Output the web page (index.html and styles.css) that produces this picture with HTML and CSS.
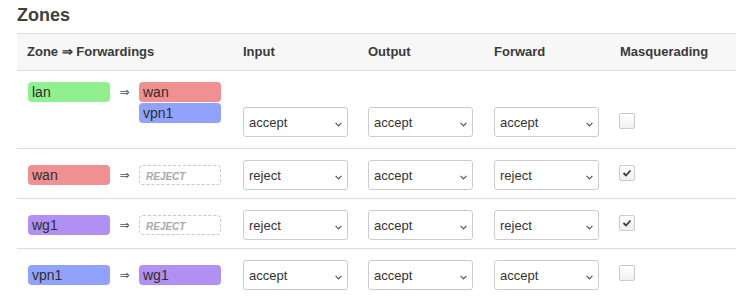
FILE: index.html
```html
<!DOCTYPE html>
<html>
<head>
    <title>Firewall - Zones</title>
    <link rel="stylesheet" href="styles.css">
</head>
<body>
<div class="page">
    <h2 class="title">Zones</h2>

    <table class="zones">
        <colgroup>
            <col class="c-fwd">
            <col class="c-opt">
            <col class="c-opt2">
            <col class="c-opt2">
            <col>
        </colgroup>
        <thead>
            <tr>
                <th>Zone &rArr; Forwardings</th>
                <th>Input</th>
                <th>Output</th>
                <th>Forward</th>
                <th>Masquerading</th>
            </tr>
        </thead>
        <tbody>
            <tr class="multi">
                <td class="fwd">
                    <div class="zone-forwards">
                        <span class="zonebadge lan">lan</span>
                        <span class="arrow">&rArr;</span>
                        <div class="zone-dest">
                            <span class="zonebadge wan">wan</span>
                            <span class="zonebadge vpn">vpn1</span>
                        </div>
                    </div>
                </td>
                <td class="opt">
                    <div class="select-wrap">
                        <select class="cbi-select"><option selected>accept</option><option>reject</option><option>drop</option></select>
                        <svg class="chev" width="7" height="5" viewBox="0 0 7 5"><path d="M0.6 0.8 L3.5 3.8 L6.4 0.8" fill="none" stroke="#555" stroke-width="1.2"/></svg>
                    </div>
                </td>
                <td class="opt">
                    <div class="select-wrap">
                        <select class="cbi-select"><option selected>accept</option><option>reject</option><option>drop</option></select>
                        <svg class="chev" width="7" height="5" viewBox="0 0 7 5"><path d="M0.6 0.8 L3.5 3.8 L6.4 0.8" fill="none" stroke="#555" stroke-width="1.2"/></svg>
                    </div>
                </td>
                <td class="opt">
                    <div class="select-wrap">
                        <select class="cbi-select"><option selected>accept</option><option>reject</option><option>drop</option></select>
                        <svg class="chev" width="7" height="5" viewBox="0 0 7 5"><path d="M0.6 0.8 L3.5 3.8 L6.4 0.8" fill="none" stroke="#555" stroke-width="1.2"/></svg>
                    </div>
                </td>
                <td class="opt"><span class="cb"></span></td>
            </tr>
            <tr>
                <td class="fwd">
                    <div class="zone-forwards">
                        <span class="zonebadge wan">wan</span>
                        <span class="arrow">&rArr;</span>
                        <div class="zone-dest">
                            <span class="zonebadge empty"><em>REJECT</em></span>
                        </div>
                    </div>
                </td>
                <td class="opt">
                    <div class="select-wrap">
                        <select class="cbi-select"><option>accept</option><option selected>reject</option><option>drop</option></select>
                        <svg class="chev" width="7" height="5" viewBox="0 0 7 5"><path d="M0.6 0.8 L3.5 3.8 L6.4 0.8" fill="none" stroke="#555" stroke-width="1.2"/></svg>
                    </div>
                </td>
                <td class="opt">
                    <div class="select-wrap">
                        <select class="cbi-select"><option selected>accept</option><option>reject</option><option>drop</option></select>
                        <svg class="chev" width="7" height="5" viewBox="0 0 7 5"><path d="M0.6 0.8 L3.5 3.8 L6.4 0.8" fill="none" stroke="#555" stroke-width="1.2"/></svg>
                    </div>
                </td>
                <td class="opt">
                    <div class="select-wrap">
                        <select class="cbi-select"><option>accept</option><option selected>reject</option><option>drop</option></select>
                        <svg class="chev" width="7" height="5" viewBox="0 0 7 5"><path d="M0.6 0.8 L3.5 3.8 L6.4 0.8" fill="none" stroke="#555" stroke-width="1.2"/></svg>
                    </div>
                </td>
                <td class="opt">
                    <span class="cb">
                        <svg width="14" height="14" viewBox="0 0 14 14"><path d="M3.5 7 L6 9.5 L10.5 4.5" fill="none" stroke="#3a3a3a" stroke-width="1.8"/></svg>
                    </span>
                </td>
            </tr>
            <tr>
                <td class="fwd">
                    <div class="zone-forwards">
                        <span class="zonebadge wg">wg1</span>
                        <span class="arrow">&rArr;</span>
                        <div class="zone-dest">
                            <span class="zonebadge empty"><em>REJECT</em></span>
                        </div>
                    </div>
                </td>
                <td class="opt">
                    <div class="select-wrap">
                        <select class="cbi-select"><option>accept</option><option selected>reject</option><option>drop</option></select>
                        <svg class="chev" width="7" height="5" viewBox="0 0 7 5"><path d="M0.6 0.8 L3.5 3.8 L6.4 0.8" fill="none" stroke="#555" stroke-width="1.2"/></svg>
                    </div>
                </td>
                <td class="opt">
                    <div class="select-wrap">
                        <select class="cbi-select"><option selected>accept</option><option>reject</option><option>drop</option></select>
                        <svg class="chev" width="7" height="5" viewBox="0 0 7 5"><path d="M0.6 0.8 L3.5 3.8 L6.4 0.8" fill="none" stroke="#555" stroke-width="1.2"/></svg>
                    </div>
                </td>
                <td class="opt">
                    <div class="select-wrap">
                        <select class="cbi-select"><option>accept</option><option selected>reject</option><option>drop</option></select>
                        <svg class="chev" width="7" height="5" viewBox="0 0 7 5"><path d="M0.6 0.8 L3.5 3.8 L6.4 0.8" fill="none" stroke="#555" stroke-width="1.2"/></svg>
                    </div>
                </td>
                <td class="opt">
                    <span class="cb">
                        <svg width="14" height="14" viewBox="0 0 14 14"><path d="M3.5 7 L6 9.5 L10.5 4.5" fill="none" stroke="#3a3a3a" stroke-width="1.8"/></svg>
                    </span>
                </td>
            </tr>
            <tr>
                <td class="fwd">
                    <div class="zone-forwards">
                        <span class="zonebadge vpn">vpn1</span>
                        <span class="arrow">&rArr;</span>
                        <div class="zone-dest">
                            <span class="zonebadge wg">wg1</span>
                        </div>
                    </div>
                </td>
                <td class="opt">
                    <div class="select-wrap">
                        <select class="cbi-select"><option selected>accept</option><option>reject</option><option>drop</option></select>
                        <svg class="chev" width="7" height="5" viewBox="0 0 7 5"><path d="M0.6 0.8 L3.5 3.8 L6.4 0.8" fill="none" stroke="#555" stroke-width="1.2"/></svg>
                    </div>
                </td>
                <td class="opt">
                    <div class="select-wrap">
                        <select class="cbi-select"><option selected>accept</option><option>reject</option><option>drop</option></select>
                        <svg class="chev" width="7" height="5" viewBox="0 0 7 5"><path d="M0.6 0.8 L3.5 3.8 L6.4 0.8" fill="none" stroke="#555" stroke-width="1.2"/></svg>
                    </div>
                </td>
                <td class="opt">
                    <div class="select-wrap">
                        <select class="cbi-select"><option selected>accept</option><option>reject</option><option>drop</option></select>
                        <svg class="chev" width="7" height="5" viewBox="0 0 7 5"><path d="M0.6 0.8 L3.5 3.8 L6.4 0.8" fill="none" stroke="#555" stroke-width="1.2"/></svg>
                    </div>
                </td>
                <td class="opt"><span class="cb"></span></td>
            </tr>
        </tbody>
    </table>
</div>
</body>
</html>
```

FILE: styles.css
```css
body {
    margin: 0;
    font-family: "Liberation Sans", Arial, sans-serif;
    color: #404040;
    background: #fff;
}

.page {
    padding: 3px 0 0 17px;
}

.title {
    margin: 0 0 6px;
    font-size: 18px;
    line-height: 24px;
    font-weight: bold;
    color: #404040;
}

.zones {
    border-collapse: collapse;
    table-layout: fixed;
    width: 719px;
}

.c-fwd { width: 216px; }
.c-opt { width: 125px; }
.c-opt2 { width: 126px; }

.zones th {
    background-color: #f7f7f7;
    border-top: 1px solid #ddd;
    border-bottom: 1px solid #ddd;
    padding: 10px 10px;
    line-height: 16px;
    font-size: 13px;
    font-weight: bold;
    text-align: left;
    color: #3a3a3a;
}

.zones td {
    padding: 11px 10px 8px;
    border-bottom: 1px solid #ddd;
    vertical-align: middle;
}

.zones tbody tr:last-child td {
    border-bottom: none;
}

/* first row holds two forward targets, controls sit at the bottom */
.multi td.fwd {
    vertical-align: top;
    padding-bottom: 25px;
}

.multi td.opt {
    vertical-align: bottom;
    padding-bottom: 11px;
}

.zone-forwards {
    display: flex;
    align-items: flex-start;
    padding-left: 1px;
}

.zone-dest {
    display: flex;
    flex-direction: column;
    gap: 1px;
}

.arrow {
    width: 29px;
    height: 20px;
    line-height: 20px;
    text-align: center;
    font-family: "DejaVu Sans", sans-serif;
    font-size: 12px;
    color: #555;
}

.zonebadge {
    display: block;
    box-sizing: border-box;
    width: 82px;
    height: 20px;
    line-height: 20px;
    padding: 0 4px;
    border-radius: 4px;
    font-size: 14px;
    color: #2e2e2e;
    white-space: nowrap;
}

.zonebadge.lan { background-color: #90f090; }
.zonebadge.wan { background-color: #f09090; }
.zonebadge.vpn { background-color: #90a2fc; }
.zonebadge.wg { background-color: #b090f2; }

.zonebadge.empty {
    border: 1px dashed #c8c8c8;
    line-height: 18px;
    padding-left: 6px;
}

.zonebadge.empty em {
    font-size: 10px;
    font-weight: bold;
    color: #aaa;
}

.select-wrap {
    position: relative;
    width: 105px;
    height: 30px;
}

.cbi-select {
    appearance: none;
    -webkit-appearance: none;
    box-sizing: border-box;
    width: 105px;
    height: 30px;
    margin: 0;
    padding: 0 16px 0 5px;
    border: 1px solid #ccc;
    border-radius: 3px;
    background: #fff;
    font-family: "Liberation Sans", Arial, sans-serif;
    font-size: 13px;
    color: #333;
}

.chev {
    position: absolute;
    right: 6px;
    top: 15px;
    pointer-events: none;
}

.cb {
    display: block;
    box-sizing: border-box;
    width: 16px;
    height: 16px;
    margin: 0 0 5px -1px;
    border: 1px solid #cbcbcb;
    border-radius: 2px;
    background: linear-gradient(#ffffff, #f0f0f0);
}

.cb svg {
    display: block;
    margin: 0;
}

.multi .cb {
    margin-bottom: 8px;
}
```
